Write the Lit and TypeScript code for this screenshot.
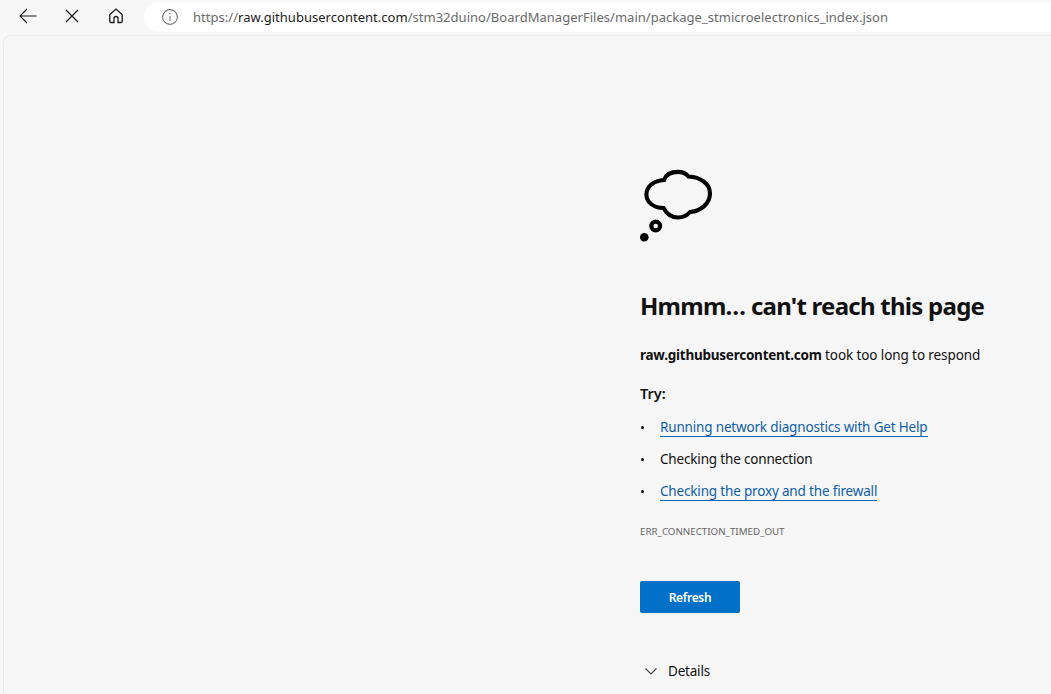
import { LitElement, html, css } from "lit";
import { customElement } from "lit/decorators.js";

@customElement("app-root")
export class AppRoot extends LitElement {
  static styles = css`
    :host { display: block; width: 1051px; height: 694px; overflow: hidden; background: #f7f7f7; font-family: "Noto Sans", "Open Sans", sans-serif; color: #111; }
    .toolbar { height: 35px; display: flex; align-items: flex-start; box-sizing: border-box; }
    .tool { width: 44px; height: 32px; flex: none; display: flex; align-items: center; justify-content: center; }
    .tools { display: flex; padding-left: 6px; }
    .omni { flex: 1; height: 30px; margin: 2px 0 0 6px; background: #fff; border-radius: 15px 0 0 15px; display: flex; align-items: center; padding-left: 17px; gap: 14px; }
    .url { font-size: 13px; color: #6a6a6a; white-space: nowrap; letter-spacing: 0.024px; }
    .url b { font-weight: 400; color: #1a1a1a; }
    .page { height: 659px; margin-left: 3px; background: #f6f6f6; border: 1px solid #ebebeb; border-right: 0; border-bottom: 0; border-top-left-radius: 8px; box-sizing: border-box; padding: 132px 0 0 636px; }
    .cloud { display: block; width: 74px; height: 74px; }
    h1 { margin: 48px 0 0; font-size: 24px; line-height: 32px; font-weight: 700; letter-spacing: -0.74px; white-space: nowrap; }
    .msg { margin: 23px 0 0; font-size: 13.5px; line-height: 20px; white-space: nowrap; letter-spacing: -0.1px; }
    .msg strong { letter-spacing: -0.24px; }
    .try { margin: 18px 0 0; font-size: 14.5px; line-height: 20px; font-weight: 600; }
    ul { list-style: none; margin: 8px 0 0; padding: 0; }
    li { height: 32px; display: flex; align-items: center; font-size: 13.5px; white-space: nowrap; letter-spacing: -0.17px; }
    li::before { content: ""; width: 3px; height: 3px; border-radius: 50%; background: #111; margin: 0 16px 0 1px; flex: none; }
    a { color: #0f5ea8; text-decoration: none; border-bottom: 1px solid #0067b8; line-height: 18px; }
    .code { margin: 18px 0 0; font-size: 9.75px; line-height: 14px; color: #666; white-space: nowrap; }
    button { display: block; margin-top: 42px; width: 100px; height: 32px; background: #0070c9; border: 0; border-radius: 2px; color: #fff; font: 600 12px "Noto Sans", sans-serif; letter-spacing: -0.3px; padding: 0; }
    .details { display: flex; align-items: center; margin: 48px 0 0 5px; gap: 11px; font-size: 13.5px; letter-spacing: -0.2px; height: 20px; }
  `;

  render() {
    return html`
      <div class="toolbar">
        <div class="tools">
          <div class="tool"><svg width="20" height="20" viewBox="0 0 20 20" fill="none" stroke="#1a1a1a" stroke-width="1.2"><path d="M18.5 10H2M9 3 2 10l7 7"/></svg></div>
          <div class="tool"><svg width="16" height="16" viewBox="0 0 16 16" fill="none" stroke="#1a1a1a" stroke-width="1.2"><path d="M2 2l12 12M14 2 2 14"/></svg></div>
          <div class="tool"><svg width="18" height="18" viewBox="0 0 18 18" fill="none" stroke="#1a1a1a" stroke-width="1.3"><path d="M7 15.5V11.5a2 2 0 0 1 4 0v4h3a1.2 1.2 0 0 0 1.2-1.2V7.5L9 2 2.8 7.5v6.8A1.2 1.2 0 0 0 4 15.5z"/></svg></div>
        </div>
        <div class="omni">
          <svg width="18" height="18" viewBox="0 0 18 18" fill="none" stroke="#707070" stroke-width="1.1"><circle cx="9" cy="9" r="7.4"/><path d="M9 8v5M9 5v1.3"/></svg>
          <span class="url">https://<b>raw.githubusercontent.com</b>/stm32duino/BoardManagerFiles/main/package_stmicroelectronics_index.json</span>
        </div>
      </div>
      <div class="page">
        <svg class="cloud" viewBox="0 0 74 74" fill="none" stroke="#000" stroke-width="4.1">
          <path d="M24 12C26 6.500 31 3.900 38 3.900C43 3.900 46 5.500 48.500 8.500C60 9 70 15.500 70 25.500C70 35.500 61 43 50 44C47 47.500 43 49.500 38 49.500C31.500 49.500 26.500 45.500 23.500 40C14 40 6.400 34.500 6.400 26.500C6.400 18.500 14 12.500 24 12Z"/>
          <circle cx="15.700" cy="58" r="4.400" stroke-width="4.200"/>
          <circle cx="4.300" cy="69.300" r="4.300" fill="#000" stroke="none"/>
        </svg>
        <h1>Hmmm… can't reach this page</h1>
        <p class="msg"><strong>raw.githubusercontent.com</strong> took too long to respond</p>
        <p class="try">Try:</p>
        <ul>
          <li><a>Running network diagnostics with Get Help</a></li>
          <li>Checking the connection</li>
          <li><a>Checking the proxy and the firewall</a></li>
        </ul>
        <p class="code">ERR_CONNECTION_TIMED_OUT</p>
        <button>Refresh</button>
        <div class="details">
          <svg width="12" height="7" viewBox="0 0 12 7" fill="none" stroke="#444" stroke-width="1.1"><path d="M.5.5 6 6 11.500.5"/></svg>
          <span>Details</span>
        </div>
      </div>
    `;
  }
}
